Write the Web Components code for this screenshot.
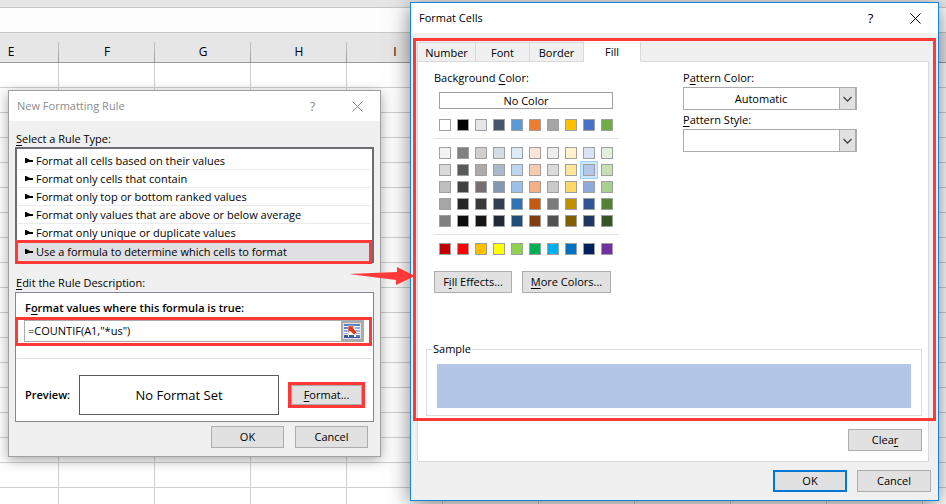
<!DOCTYPE html>
<html lang="en">
<head>
    <meta charset="UTF-8">
    <meta name="viewport" content="width=device-width, initial-scale=1.0">
    <title>Format Cells</title>
    <style>
        html, body {
            height: 100%;
            margin: 0;
        }
        body {
            font: 11px/16px "Open Sans", "Noto Sans", sans-serif;
            color: #000;
            --mark: #ff3838;
        }
    </style>
</head>
<body>
    <x-desktop></x-desktop>

    <script>
        const define = (name, html, setup) => {
            const template = document.createElement('template');
            template.innerHTML = html;
            customElements.define(name, class extends HTMLElement {
                constructor() {
                    super();
                    this.attachShadow({ mode: 'open' }).appendChild(template.content.cloneNode(true));
                }
                connectedCallback() {
                    if (setup) setup(this.shadowRoot, this);
                }
            });
        };

        // worksheet behind the dialogs
        define('x-sheet', `
          <style>
            :host { display: block; overflow: hidden; background: #fff; }
            .strip { height: 7px; background: #e6e6e6; border-bottom: 1px solid #c6c6c6; }
            .bar { height: 24px; background: #fdfdfd; border-bottom: 1px solid #c6c6c6; }
            table { table-layout: fixed; border-collapse: separate; border-spacing: 0; width: 1152px; margin-left: -37px; }
            th, td { box-sizing: border-box; padding: 0; border-right: 1px solid #d0d0d0; border-bottom: 1px solid #d0d0d0; height: 25px; }
            th {
                height: 30px; padding-top: 9px; font-size: 12px; line-height: 20px; font-weight: 400;
                background: #e6e6e6; border-bottom-color: #999; border-right: 0;
                background-image: linear-gradient(#c4c4c4, #a0a0a0);
                background-size: 1px 20px; background-position: right bottom; background-repeat: no-repeat;
            }
          </style>
          <div class="strip"></div>
          <div class="bar"></div>
          <table><thead><tr></tr></thead><tbody></tbody></table>
        `, root => {
            const heads = ['E', 'F', 'G', 'H', 'I', '', '', '', '', '', '', ''];
            root.querySelector('thead tr').innerHTML = heads.map(h => `<th>${h}</th>`).join('');
            root.querySelector('tbody').innerHTML = ('<tr>' + '<td></td>'.repeat(heads.length) + '</tr>').repeat(40);
        });

        define('x-button', `
          <style>
            :host { display: inline-block; width: 73px; }
            button {
                display: block; box-sizing: border-box; width: 100%; height: var(--button-height, 22px); padding: 0;
                font: inherit; color: inherit; text-align: center; white-space: nowrap;
                background: #e1e1e1; border: 1px solid #adadad; border-radius: 0;
            }
            :host([primary]) button { border: 2px solid #0078d7; }
            :host([plain]) button { background: #fff; border-color: #a0a0a0; height: 17px; line-height: 15px; }
          </style>
          <button type="button"><slot></slot></button>
        `);

        // red frame around whatever is slotted in
        define('x-mark', `
          <style>
            :host { display: block; box-sizing: border-box; border: 3px solid var(--mark); }
          </style>
          <slot></slot>
        `);

        define('x-dialog', `
          <style>
            :host { display: block; box-sizing: border-box; background: #f0f0f0; border: 1px solid #a0a0a0; box-shadow: 0 3px 12px rgba(0, 0, 0, .35); }
            :host([active]) { border-color: #1883d7; box-shadow: 0 4px 20px rgba(0, 0, 0, .5); }
            header { display: flex; align-items: center; height: 30px; padding-left: 8px; background: #fff; color: #8c8c8c; }
            :host([active]) header { color: #000; }
            h2 { flex: 1; margin: 0; font: inherit; }
            header button { display: grid; place-items: center; width: 45px; height: 28px; padding: 0; border: 0; background: none; color: inherit; font: inherit; font-size: 13px; }
            svg { display: block; }
          </style>
          <header>
            <h2></h2>
            <button type="button">?</button>
            <button type="button" aria-label="Close">
              <svg width="11" height="11" viewBox="0 0 11 11" fill="none" stroke="currentColor"><path d="M.5.5l10 10M10.5.5l-10 10"/></svg>
            </button>
          </header>
          <slot></slot>
        `, (root, host) => {
            root.querySelector('h2').textContent = host.getAttribute('caption');
        });

        define('x-rule', `
          <style>
            :host { display: flex; align-items: center; height: 17px; padding: 0 7px; border-bottom: 1px solid #ebebeb; white-space: nowrap; }
            :host([aria-selected="true"]) { background: #dfdfe4; }
            svg { flex: none; margin-right: 3px; }
          </style>
          <svg width="8" height="5" viewBox="0 0 8 5"><path d="M0 0H1L5 2H8V4H4L1 5H0Z"/></svg>
          <slot></slot>
        `);

        define('x-new-rule', `
          <style>
            :host { display: block; padding: 10px 6px 8px; }
            u { text-underline-offset: 2px; }
            .label { display: block; padding-left: 1px; }
            .list { display: flow-root; margin: 0 0 12px; padding: 3px 1px 0; background: #fff; border: 2px solid #6b6b70; height: 109px; }
            .list x-mark { margin: -2px -1px 0 -3px; background: #fff; }
            .edit { margin-top: 1px; border: 1px solid #828790; background: #fff; }
            .edit label, .edit .bold { font-weight: 600; }
            .edit label { display: block; padding: 7px 9px 1px; }
            .formula { margin: 0 1px 0 -1px; padding: 0 5px 1px 6px; }
            .field { display: flex; height: 22px; box-sizing: border-box; border: 1px solid #ababab; }
            input { flex: 1; min-width: 0; padding: 0 3px; border: 0; font: inherit; }
            .field button { width: 22px; padding: 0; border: 2px solid #ababab; background: #e1e1e1; display: grid; place-items: center; }
            hr { margin: 12px 1px 16px; border: 0; border-top: 1px solid #e0e0e0; }
            .preview { display: flex; align-items: center; padding: 0 8px 6px 9px; }
            .box { flex: 1; margin: 0 9px; height: 38px; border: 1px solid #5a5a5a; font-size: 13px; line-height: 38px; text-align: center; }
            .preview x-button { display: block; width: 71px; --button-height: 20px; }
            footer { display: flex; justify-content: flex-end; gap: 11px; padding: 4px 6px 0 0; }
          </style>
          <span class="label" id="type"><u>S</u>elect a Rule Type:</span>
          <div class="list" role="listbox" aria-labelledby="type">
            <x-rule role="option">Format all cells based on their values</x-rule>
            <x-rule role="option">Format only cells that contain</x-rule>
            <x-rule role="option">Format only top or bottom ranked values</x-rule>
            <x-rule role="option">Format only values that are above or below average</x-rule>
            <x-rule role="option">Format only unique or duplicate values</x-rule>
            <x-mark><x-rule role="option" aria-selected="true">Use a formula to determine which cells to format</x-rule></x-mark>
          </div>
          <span class="label"><u>E</u>dit the Rule Description:</span>
          <div class="edit">
            <label for="formula">F<u>o</u>rmat values where this formula is true:</label>
            <x-mark class="formula">
              <div class="field">
                <input id="formula" type="text" value='=COUNTIF(A1,"*us")'>
                <button type="button" aria-label="Pick range">
                  <svg width="16" height="14" viewBox="0 0 16 14">
                    <path fill="#fff" d="M0 0h16v14H0z"/>
                    <path fill="#5a7fc4" d="M0 0h16v2H0zM0 3h4v2H0zM12 11h4v2h-4z"/>
                    <path fill="#8fb0e6" d="M5 3h5v2H5zM11 3h5v2h-5zM0 6h4v2H0zM12 6h4v2h-4zM0 9h4v1H0zM12 9h4v1h-4z"/>
                    <path fill="#3a57a5" d="M0 11h4v2H0zM5 11h5v2H5zM0 13h16v1H0z"/>
                    <path fill="#e0391f" stroke="#fff" stroke-width=".5" d="M4 2h6L9 4l4 4-3 3-4-4-2 2z"/>
                  </svg>
                </button>
              </div>
            </x-mark>
            <hr>
            <div class="preview">
              <span class="bold">Preview:</span>
              <div class="box">No Format Set</div>
              <x-mark><x-button><u>F</u>ormat...</x-button></x-mark>
            </div>
          </div>
          <footer>
            <x-button>OK</x-button>
            <x-button>Cancel</x-button>
          </footer>
        `);

        define('x-swatches', `
          <style>
            :host { display: grid; grid-template-columns: repeat(10, 12px); gap: 5px 6px; padding: 0 5px; }
            button { box-sizing: border-box; height: 12px; padding: 0; border: 1px solid #a0a0a0; }
            button.on { outline: 2px solid #cce8ff; box-shadow: 0 0 0 3px #99d1ff; }
          </style>
        `, (root, host) => {
            host.getAttribute('colors').trim().split(/\s+/).forEach(c => {
                const b = document.createElement('button');
                b.type = 'button';
                b.style.background = '#' + c;
                b.setAttribute('aria-label', '#' + c);
                if (c === host.getAttribute('value')) b.className = 'on';
                root.appendChild(b);
            });
        });

        define('x-combo', `
          <style>
            :host { display: block; }
            label { display: block; }
            div { display: grid; grid-template-columns: 1fr 18px; margin-top: 1px; height: 23px; }
            select {
                grid-area: 1 / 1 / 2 / 3; appearance: none; box-sizing: border-box; width: 100%; padding: 0 18px 0 0;
                border: 1px solid #ababab; border-radius: 0; background: #fff; color: #000; font: inherit; text-align: center; text-align-last: center;
            }
            svg { grid-area: 1 / 2; box-sizing: border-box; width: 18px; height: 23px; border: 1px solid #ababab; border-right-width: 2px; background: #e1e1e1; pointer-events: none; }
          </style>
          <label for="pick"><slot></slot></label>
          <div>
            <select id="pick"><option></option></select>
            <svg viewBox="0 0 15 21" fill="none" stroke="#444" stroke-width="1.3"><path d="M3.5 9l4 4 4-4"/></svg>
          </div>
        `, (root, host) => {
            root.querySelector('option').textContent = host.getAttribute('value');
        });

        define('x-format-cells', `
          <style>
            :host { display: block; padding: 5px 2px 8px; }
            u { text-underline-offset: 2px; }
            nav { display: flex; align-items: flex-end; margin-bottom: -1px; }
            nav button {
                box-sizing: border-box; width: 54px; height: 20px; padding: 1px 0 0; border: 1px solid #d9d9d9; border-left-width: 0;
                background: #f0f0f0; font: inherit; color: inherit; line-height: 18px;
            }
            nav button:first-child { width: 59px; border-left-width: 1px; }
            nav button.on { width: 57px; height: 21px; padding: 0; background: #fff; border-bottom-color: #fff; border-top-color: #fff; }
            x-mark { padding: 0 4px 0 1px; position: relative; }
            .panel { border: 1px solid #d9d9d9; border-bottom: 0; background: #fff; padding: 8px 6px 2px 8px; }
            .cols { display: grid; grid-template-columns: 185px 174px; justify-content: start; column-gap: 64px; padding-left: 8px; }
            .none { display: block; width: 174px; margin: 6px 5px 10px; }
            hr { margin: 7px 0 8px; border: 0; border-top: 1px solid #e0e0e0; }
            .row { display: flex; gap: 10px; margin-top: 16px; }
            .fill { width: 78px; }
            .more { width: 89px; }
            x-combo + x-combo { margin-top: 2px; }
            fieldset { margin: 48px 0 0; padding: 7px 10px 7px; border: 1px solid #dcdcdc; min-width: 0; }
            legend { margin-left: -5px; padding: 0 1px; }
            .sample { height: 44px; background: #b4c6e7; }
            .clear { display: flex; justify-content: flex-end; margin: 0 7px 0 4px; padding: 8px 6px 10px; background: #fff; border: 1px solid #d9d9d9; border-top: 0; }
            footer { display: flex; justify-content: flex-end; gap: 10px; padding: 8px 5px 0; }
            .clear x-button, footer x-button { width: 74px; }
          </style>
          <x-mark>
            <nav>
              <button type="button">Number</button><button type="button">Font</button><button type="button">Border</button><button type="button" class="on">Fill</button>
            </nav>
            <div class="panel">
              <div class="cols">
                <div>
                  <span>Background <u>C</u>olor:</span>
                  <x-button plain class="none">No Color</x-button>
                  <x-swatches colors="ffffff 000000 e7e6e6 44546a 5b9bd5 ed7d31 a5a5a5 ffc000 4472c4 70ad47"></x-swatches>
                  <hr>
                  <x-swatches value="b4c6e7" colors="
                    f2f2f2 808080 d0cece d6dce4 ddebf7 fce4d6 ededed fff2cc d9e1f2 e2efda
                    d9d9d9 595959 aeaaaa acb9ca bdd7ee f8cbad dbdbdb ffe699 b4c6e7 c6e0b4
                    bfbfbf 404040 757171 8497b0 9bc2e6 f4b084 c9c9c9 ffd966 8ea9db a9d08e
                    a6a6a6 262626 3a3838 333f4f 2f75b5 c65911 7b7b7b bf8f00 305496 548235
                    808080 0d0d0d 161616 222b35 1f4e78 833c0c 525252 806000 203764 375623"></x-swatches>
                  <hr>
                  <x-swatches colors="c00000 ff0000 ffc000 ffff00 92d050 00b050 00b0f0 0070c0 002060 7030a0"></x-swatches>
                  <div class="row">
                    <x-button class="fill">F<u>i</u>ll Effects...</x-button>
                    <x-button class="more"><u>M</u>ore Colors...</x-button>
                  </div>
                </div>
                <div>
                  <x-combo value="Automatic">P<u>a</u>ttern Color:</x-combo>
                  <x-combo value=""><u>P</u>attern Style:</x-combo>
                </div>
              </div>
              <fieldset>
                <legend>Sample</legend>
                <div class="sample"></div>
              </fieldset>
            </div>
          </x-mark>
          <div class="clear"><x-button>Clea<u>r</u></x-button></div>
          <footer>
            <x-button primary>OK</x-button>
            <x-button>Cancel</x-button>
          </footer>
        `);

        // windows float over the sheet, the arrow joins them
        define('x-desktop', `
          <style>
            :host { display: block; position: relative; height: 100%; overflow: hidden; }
            x-sheet { height: 100%; }
            x-dialog, .arrow { position: absolute; }
            .rule { left: 8px; top: 90px; width: 373px; }
            .cells { left: 410px; right: 7px; top: 2px; }
            .arrow { left: 349px; top: 267px; }
          </style>
          <x-sheet></x-sheet>
          <x-dialog class="rule" caption="New Formatting Rule"><x-new-rule></x-new-rule></x-dialog>
          <x-dialog class="cells" caption="Format Cells" active><x-format-cells></x-format-cells></x-dialog>
          <svg class="arrow" width="66" height="18" viewBox="0 0 66 18" fill="#ff3838"><path d="M0 7L48 5V0L66 9 47 18V13Z"/></svg>
        `);
    </script>
</body>
</html>
